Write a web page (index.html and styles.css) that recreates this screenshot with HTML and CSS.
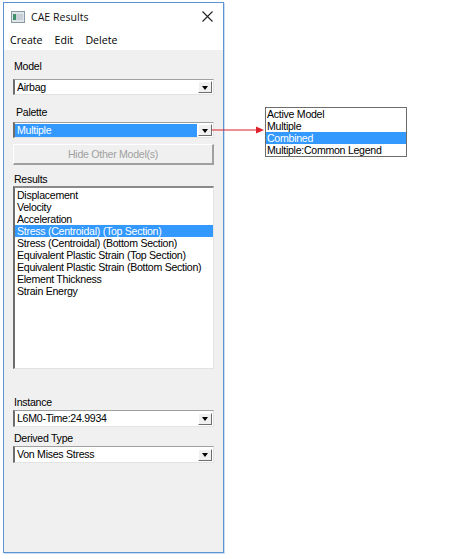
FILE: index.html
```html
<!DOCTYPE html>
<html>
<head>
<meta charset="utf-8">
<link rel="stylesheet" href="styles.css">
</head>
<body>
<div class="window">
  <div class="titlebar">
    <svg class="appicon" width="14" height="12" viewBox="0 0 14 12">
      <rect x="0.5" y="0.5" width="13" height="11" fill="#dfe6ea" stroke="#8a9aa5"/>
      <rect x="2" y="3" width="3" height="6" fill="#3f8f6a"/>
      <rect x="5" y="3" width="7" height="6" fill="#c7d0d6"/>
    </svg>
    <span class="title">CAE Results</span>
    <svg class="close" width="11" height="11" viewBox="0 0 11 11">
      <path d="M0.5 0.5 L10.5 10.5 M10.5 0.5 L0.5 10.5" stroke="#222" stroke-width="1.1"/>
    </svg>
  </div>
  <div class="menubar">
    <span class="menu">Create</span>
    <span class="menu">Edit</span>
    <span class="menu">Delete</span>
  </div>
  <div class="panel">
    <div class="label l-model">Model</div>
    <div class="combo">
      <span class="value">Airbag</span>
      <span class="drop"><span class="tri"></span></span>
    </div>
    <div class="label l-palette">Palette</div>
    <div class="combo selected">
      <span class="value">Multiple</span>
      <span class="drop"><span class="tri"></span></span>
    </div>
    <div class="button">Hide Other Model(s)</div>
    <div class="label l-results">Results</div>
    <div class="listbox">
      <div class="item">Displacement</div>
      <div class="item">Velocity</div>
      <div class="item">Acceleration</div>
      <div class="item sel">Stress (Centroidal) (Top Section)</div>
      <div class="item">Stress (Centroidal) (Bottom Section)</div>
      <div class="item">Equivalent Plastic Strain (Top Section)</div>
      <div class="item">Equivalent Plastic Strain (Bottom Section)</div>
      <div class="item">Element Thickness</div>
      <div class="item">Strain Energy</div>
    </div>
    <div class="label l-instance">Instance</div>
    <div class="combo tall">
      <span class="value">L6M0-Time:24.9934</span>
      <span class="drop"><span class="tri"></span></span>
    </div>
    <div class="label l-derived">Derived Type</div>
    <div class="combo tall">
      <span class="value">Von Mises Stress</span>
      <span class="drop"><span class="tri"></span></span>
    </div>
  </div>
</div>

<svg class="arrow" width="54" height="10" viewBox="0 0 54 10">
  <line x1="0" y1="5" x2="46" y2="5" stroke="#e0202a" stroke-width="1.2"/>
  <path d="M44 1.5 L52 5 L44 8.5 Z" fill="#e0202a"/>
</svg>

<div class="popup">
  <div class="pitem">Active Model</div>
  <div class="pitem">Multiple</div>
  <div class="pitem psel">Combined</div>
  <div class="pitem">Multiple:Common Legend</div>
</div>
</body>
</html>
```

FILE: styles.css
```css
html, body {
  margin: 0;
  padding: 0;
  background: #ffffff;
}
body {
  position: relative;
  width: 474px;
  height: 559px;
  font-family: "Liberation Sans", Arial, sans-serif;
  font-size: 10.6px;
  letter-spacing: -0.28px;
  color: #000;
}
.window {
  margin: 2px 0 0 3px;
  width: 219px;
  height: 549px;
  border: 1px solid #5b93d3;
  box-shadow: 1px 1px 0 #c9dcf0;
  display: flex;
  flex-direction: column;
  background: #f0f0f0;
}
.titlebar {
  height: 27px;
  background: #fff;
  display: flex;
  align-items: center;
  padding: 0 8px 0 7px;
  font-family: "Open Sans", "Liberation Sans", sans-serif;
  font-size: 10.6px;
  letter-spacing: 0;
}
.appicon { margin-right: 6px; flex: none; }
.title { flex: 1; color: #111; }
.close { flex: none; margin-right: 2px; }
.menubar {
  height: 20px;
  background: #fff;
  display: flex;
  align-items: center;
  padding-left: 6px;
  gap: 12px;
  font-family: "Open Sans", "Liberation Sans", sans-serif;
  font-size: 10.6px;
  letter-spacing: 0;
}
.panel {
  flex: 1;
  display: flex;
  flex-direction: column;
  padding: 0 9px 0 9px;
}
.label {
  height: 13px;
  line-height: 13px;
  padding-left: 1px;
}
.l-model { margin-top: 10px; margin-bottom: 6px; }
.l-palette { margin-top: 11px; margin-bottom: 3px; padding-left: 3px; }
.l-results { margin-top: 8px; margin-bottom: 0; }
.l-instance { margin-top: 27px; margin-bottom: 1px; }
.l-derived { margin-top: 5px; margin-bottom: 1px; }
.combo {
  height: 16px;
  box-sizing: border-box;
  background: #fff;
  border-top: 1px solid #a0a0a0;
  border-left: 2px solid #6d6d6d;
  border-right: 1px solid #e3e3e3;
  border-bottom: 1px solid #e3e3e3;
  display: flex;
  align-items: center;
}
.combo.tall { height: 17px; }
.combo .value {
  flex: 1;
  padding-left: 2px;
  line-height: 13px;
  height: 13px;
  white-space: nowrap;
}
.combo.selected .value {
  background: #3399ff;
  color: #fff;
  margin-right: 1px;
}
.drop {
  width: 14px;
  height: 12px;
  margin-right: 1px;
  box-sizing: border-box;
  background: #f0f0f0;
  border-top: 1px solid #fff;
  border-left: 1px solid #fff;
  border-right: 1px solid #6d6d6d;
  border-bottom: 1px solid #6d6d6d;
  display: flex;
  align-items: center;
  justify-content: center;
}
.tri {
  width: 0;
  height: 0;
  border-left: 3.5px solid transparent;
  border-right: 3.5px solid transparent;
  border-top: 4px solid #000;
  margin-top: 1px;
}
.button {
  margin-top: 6px;
  height: 21px;
  box-sizing: border-box;
  background: #f0f0f0;
  border-top: 1px solid #fff;
  border-left: 1px solid #fff;
  border-right: 2px solid #a0a0a0;
  border-bottom: 2px solid #a0a0a0;
  color: #a0a0a0;
  display: flex;
  align-items: center;
  justify-content: center;
  font-size: 10.6px;
}
.listbox {
  height: 183px;
  box-sizing: border-box;
  background: #fff;
  border-top: 2px solid #8a8a8a;
  border-left: 2px solid #6d6d6d;
  border-right: 1px solid #e3e3e3;
  border-bottom: 1px solid #e3e3e3;
  padding-top: 1px;
}
.item {
  height: 12px;
  line-height: 12px;
  padding-left: 2px;
  white-space: nowrap;
}
.item.sel {
  background: #3399ff;
  color: #fff;
}
.arrow {
  position: absolute;
  left: 212px;
  top: 125px;
}
.popup {
  position: absolute;
  left: 265px;
  top: 107px;
  width: 142px;
  height: 50px;
  box-sizing: border-box;
  background: #fff;
  border: 1px solid #6d6d6d;
  padding-top: 0;
}
.pitem {
  height: 12px;
  line-height: 12px;
  padding-left: 1px;
  white-space: nowrap;
}
.pitem.psel {
  background: #3399ff;
  color: #fff;
}
```
